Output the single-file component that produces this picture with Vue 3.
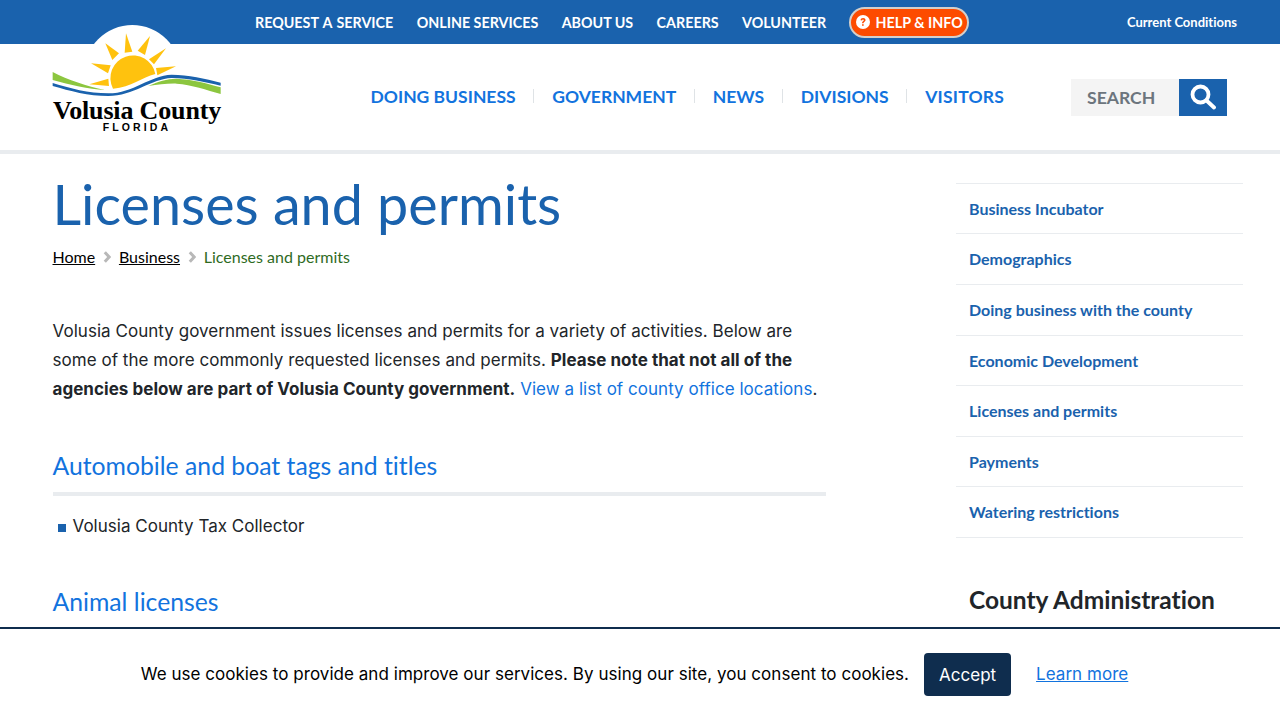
<script setup>
const topLinks = ['REQUEST A SERVICE', 'ONLINE SERVICES', 'ABOUT US', 'CAREERS', 'VOLUNTEER']
const mainLinks = ['DOING BUSINESS', 'GOVERNMENT', 'NEWS', 'DIVISIONS', 'VISITORS']
const sideLinks = ['Business Incubator', 'Demographics', 'Doing business with the county', 'Economic Development', 'Licenses and permits', 'Payments', 'Watering restrictions']
</script>

<template>
  <div class="page">
    <div class="topbar">
      <nav class="toplinks">
        <a v-for="l in topLinks" :key="l" href="#">{{ l }}</a>
        <a href="#" class="help">
          <svg width="14" height="14" viewBox="0 0 16 16"><circle cx="8" cy="8" r="8" fill="#fff"/><path d="M5.200 6.100C5.300 4.500 6.500 3.500 8.100 3.500c1.600 0 2.800 1 2.800 2.300 0 1.100-.6 1.600-1.400 2.100-.6.400-.8.600-.8 1.200v.4H6.900v-.5c0-1 .4-1.500 1.100-2 .5-.3.900-.6.900-1 0-.5-.4-.8-.9-.8-.6 0-1 .4-1 1zM6.900 10.500h1.900v1.900H6.900z" fill="#fd4b00"/></svg>
          HELP &amp; INFO
        </a>
      </nav>
      <a href="#" class="conditions">Current Conditions</a>
    </div>

    <header class="header">
      <div class="logo">
        <svg class="logo-art" width="220" height="150" viewBox="0 0 660 450">
          <circle cx="307" cy="220" r="145" fill="#fff"/>
          <g fill="#ffc20e">
            <path d="M288 100 284 158 307 155z"/>
            <path d="M360 108 323 152 345 165z"/>
            <path d="M408 145 357 178 372 193z"/>
            <path d="M438 199 378 204 382 226z"/>
            <path d="M226 130 247 180 267 160z"/>
            <path d="M183 190 234 220 242 196z"/>
            <path d="M178 253 235 236 237 258z"/>
            <path d="M249 266A68 68 0 1 1 376 222C335 232 305 262 249 266z"/>
          </g>
          <path d="M68 216C115 240 170 258 225 270 175 268 120 254 68 240z" fill="#8cc63f"/>
          <path d="M68 249C120 265 175 280 235 280 310 280 360 226 425 224 475 224 525 236 572 248V257C525 246 475 234 425 234 365 236 310 288 235 288 175 288 120 273 68 258z" fill="#1a62ad"/>
          <path d="M355 258C385 245 410 236 440 236 485 238 530 250 572 262V282C530 270 485 254 440 251 410 250 385 255 355 258z" fill="#8cc63f"/>
        </svg>
        <div class="logo-name">Volusia County</div>
        <div class="logo-state">FLORIDA</div>
      </div>
      <nav class="mainnav">
        <template v-for="(l, i) in mainLinks" :key="l">
          <span v-if="i" class="sep"></span>
          <a href="#">{{ l }}</a>
        </template>
      </nav>
      <div class="search">
        <span class="search-input">SEARCH</span>
        <button class="search-btn" aria-label="Search">
          <svg width="26" height="26" viewBox="0 0 26 26"><circle cx="10.500" cy="10.500" r="8" fill="none" stroke="#fff" stroke-width="3.800"/><path d="M16.500 16.500l7.500 7" stroke="#fff" stroke-width="3.800" stroke-linecap="round"/></svg>
        </button>
      </div>
    </header>

    <div class="body">
      <main class="content">
        <h1>Licenses and permits</h1>
        <div class="crumbs">
          <a href="#">Home</a>
          <svg class="chev" width="8" height="12" viewBox="0 0 8 12"><path d="M1.800 1.200 6.200 6l-4.400 4.800" fill="none" stroke="#b8b8b8" stroke-width="3"/></svg>
          <a href="#">Business</a>
          <svg class="chev" width="8" height="12" viewBox="0 0 8 12"><path d="M1.800 1.200 6.200 6l-4.400 4.800" fill="none" stroke="#b8b8b8" stroke-width="3"/></svg>
          <span class="current">Licenses and permits</span>
        </div>
        <p class="intro">Volusia County government issues licenses and permits for a variety of activities. Below are some of the more commonly requested licenses and permits. <strong>Please note that not all of the agencies below are part of Volusia County government.</strong> <a href="#">View a list of county office locations</a>.</p>
        <h2>Automobile and boat tags and titles</h2>
        <ul><li>Volusia County Tax Collector</li></ul>
        <h2 class="second">Animal licenses</h2>
      </main>
      <aside class="side">
        <a v-for="l in sideLinks" :key="l" href="#">{{ l }}</a>
        <h3>County Administration</h3>
      </aside>
    </div>

    <div class="cookie">
      <span>We use cookies to provide and improve our services. By using our site, you consent to cookies.</span>
      <button class="accept">Accept</button>
      <a href="#">Learn more</a>
    </div>
  </div>
</template>

<style>
html, body { margin: 0; overflow: hidden; }
</style>

<style scoped>
.page { width: 1280px; height: 720px; overflow: hidden; position: relative; background: #fff; font-family: Inter, sans-serif; color: #212529; font-variant-ligatures: none; }
a { text-decoration: none; }
.topbar { height: 44px; background: #1a62ad; display: flex; align-items: center; font-family: Lato, sans-serif; font-weight: 700; color: #fff; padding-left: 255px; padding-right: 43px; box-sizing: border-box; justify-content: space-between; }
.toplinks { display: flex; align-items: center; gap: 23.400px; }
.toplinks a { color: #fff; font-size: 14.300px; }
.toplinks a:first-child { word-spacing: 1px; }
.toplinks a.help { display: flex; align-items: center; gap: 6px; height: 31px; margin-left: -1px; box-sizing: border-box; padding: 0 4px 0 5px; background: #fd4b00; border: 2px solid #d3cfcb; border-radius: 16px; }
.conditions { color: #fff; font-size: 13px; }
.header { height: 110px; border-bottom: 4px solid #e9ecef; box-sizing: border-box; display: flex; align-items: center; padding-right: 53px; position: relative; }
.logo { position: absolute; left: 53px; top: -19px; width: 170px; height: 108px; }
.logo-art { position: absolute; left: -23px; top: -25px; }
.logo-name { position: absolute; left: -4px; right: -2px; top: 75px; text-align: center; font-family: "Liberation Serif", serif; font-weight: 700; font-size: 26px; letter-spacing: -0.150px; color: #000; line-height: 22px; white-space: nowrap; }
.logo-state { position: absolute; left: -1px; right: 1px; top: 97px; text-align: center; font-family: "Liberation Sans", sans-serif; font-weight: 700; font-size: 10.500px; letter-spacing: 3.100px; color: #000; line-height: 10px; }
.mainnav { display: flex; align-items: center; margin-left: 370.500px; padding-bottom: 2px; gap: 17.800px; font-family: Lato, sans-serif; font-weight: 700; font-size: 17.500px; }
.mainnav a { color: #1273de; }
.mainnav a:last-child { letter-spacing: 0.200px; }
.sep { width: 1px; height: 14px; background: #dfe3e6; }
.search { display: flex; margin-left: auto; height: 37px; }
.search-input { width: 108px; box-sizing: border-box; padding-left: 16px; background: #f4f4f4; color: #6c757d; font-family: Lato, sans-serif; font-weight: 700; font-size: 17.600px; line-height: 37px; }
.search-btn { width: 48px; height: 37px; border: 0; padding: 0; background: #1a62ad; display: flex; align-items: center; justify-content: center; }
.body { display: flex; padding-left: 52.500px; }
.content { width: 773.500px; }
h1 { margin: 19px 0 0; font-family: Lato, sans-serif; font-weight: 400; font-size: 55.700px; line-height: 62px; color: #1a62ad; }
.crumbs { display: flex; align-items: center; margin-top: 9px; height: 24px; font-family: Lato, sans-serif; font-size: 16px; }
.crumbs a { color: #000; text-decoration: underline; }
.chev { margin: 1px 8px 0 7.750px; }
.current { color: #2f6b1f; }
.intro { margin: 49px 0 0; font-size: 17px; letter-spacing: 0.040px; line-height: 29px; }
.intro a { color: #1273de; }
h2 { margin: 47px 0 0; padding-bottom: 11px; font-family: Lato, sans-serif; font-weight: 400; font-size: 24.750px; line-height: 30px; color: #1273de; border-bottom: 4px solid #e9ecef; }
ul { margin: 17px 0 0; padding: 0; list-style: none; }
li { font-size: 17px; letter-spacing: 0.020px; line-height: 27px; padding-left: 20px; position: relative; }
li::before { content: ""; position: absolute; left: 5px; top: 11px; width: 8px; height: 8px; background: #1a62ad; }
h2.second { margin-top: 47px; }
.side { margin-left: 130px; width: 287px; padding-top: 28.800px; font-family: Lato, sans-serif; }
.side a { display: block; height: 50.600px; box-sizing: border-box; border-top: 1px solid #e9ecef; padding-left: 13px; line-height: 50px; font-weight: 700; font-size: 16px; color: #1a62ad; }
.side a:last-of-type { border-bottom: 1px solid #e9ecef; height: 51.600px; }
h3 { margin: 47.500px 0 0 13px; font-size: 24.500px; line-height: 30px; font-weight: 700; color: #212529; }
.cookie { position: absolute; left: 0; right: 0; bottom: 0; height: 93px; box-sizing: border-box; border-top: 2px solid #0f2d4e; padding-right: 11px; background: #fff; display: flex; align-items: center; justify-content: center; font-size: 17px; letter-spacing: 0.040px; color: #000; }
.cookie span, .cookie a { margin-bottom: 2px; }
.accept { margin: 0 25px 0 15px; height: 43px; width: 87px; border: 0; border-radius: 4px; background: #0f2d4e; color: #fff; font: 17px Inter, sans-serif; letter-spacing: 0.040px; }
.cookie a { color: #1273de; text-decoration: underline; }
</style>
